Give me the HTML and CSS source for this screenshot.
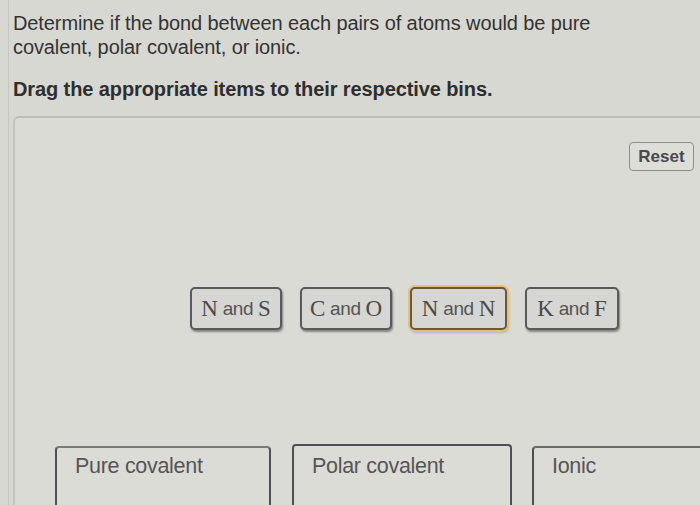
FILE: index.html
```html
<!DOCTYPE html>
<html>
<head>
<meta charset="utf-8">
<link rel="stylesheet" href="styles.css">
</head>
<body>
<div class="page">
  <div class="intro">
    <p class="q">Determine if the bond between each pairs of atoms would be pure covalent, polar covalent, or ionic.</p>
    <p class="instr">Drag the appropriate items to their respective bins.</p>
  </div>
  <div class="board">
    <div class="toolbar"><button class="reset">Reset</button></div>
    <div class="items">
      <div class="item"><span class="el">N</span> and <span class="el">S</span></div>
      <div class="item"><span class="el">C</span> and <span class="el">O</span></div>
      <div class="item focus"><span class="el">N</span> and <span class="el">N</span></div>
      <div class="item"><span class="el">K</span> and <span class="el">F</span></div>
    </div>
    <div class="bins">
      <div class="bin b1">Pure covalent</div>
      <div class="bin b2">Polar covalent</div>
      <div class="bin b3">Ionic</div>
    </div>
  </div>
</div>
</body>
</html>
```
FILE: styles.css
```css
html, body {
  margin: 0;
  padding: 0;
  width: 700px;
  height: 505px;
  overflow: hidden;
  background: #d8d8d2;
  font-family: "Liberation Sans", Arial, sans-serif;
}
.page {
  margin-left: 8px;
  border-left: 1px solid #c6c6c0;
  height: 505px;
  box-sizing: border-box;
  padding-left: 4px;
  display: flex;
  flex-direction: column;
}
.intro {
  padding-top: 11px;
}
.q {
  margin: 0;
  font-size: 20px;
  line-height: 24px;
  color: #333;
  width: 620px;
  letter-spacing: -0.1px;
}
.instr {
  margin: 18px 0 0 0;
  font-size: 20px;
  line-height: 24px;
  font-weight: bold;
  color: #2e2e2e;
  letter-spacing: -0.1px;
}
.board {
  margin-top: 15px;
  flex: 1;
  border-top: 2px solid #bdbdb6;
  border-left: 2px solid #c4c4be;
  border-top-left-radius: 6px;
  background: #dbdbd5;
  display: flex;
  flex-direction: column;
}
.toolbar {
  display: flex;
  justify-content: flex-end;
  padding: 24px 6px 0 0;
}
.reset {
  font-family: "Liberation Sans", Arial, sans-serif;
  font-weight: bold;
  font-size: 17px;
  color: #4a4a4a;
  background: #deded8;
  border: 1px solid #8e8e8a;
  border-radius: 4px;
  padding: 3px 7px;
  height: 29px;
  width: 65px;
}
.items {
  display: flex;
  gap: 18px;
  padding: 116px 0 0 175px;
}
.item {
  height: 43px;
  flex-shrink: 0;
  box-sizing: border-box;
  border: 2px solid #5a5a5a;
  border-radius: 5px;
  background: #d6d6d2;
  box-shadow: 1px 2px 2px rgba(60, 60, 60, 0.55);
  display: flex;
  align-items: center;
  justify-content: center;
  font-family: "Liberation Sans", Arial, sans-serif;
  font-size: 19px;
  color: #555;
  white-space: pre;
  letter-spacing: -0.4px;
}
.item .el {
  font-family: "Liberation Serif", "Times New Roman", serif;
  font-size: 23px;
  color: #4a4a4a;
  letter-spacing: 0;
}
.item:nth-child(1) { width: 92px; }
.item:nth-child(2) { width: 92px; }
.item:nth-child(3) { width: 97px; border-color: #6b5a3a; box-shadow: 0 0 0 2px #e2c27a, 1px 2px 3px rgba(60,60,60,0.5); }
.item:nth-child(4) { width: 94px; }
.bins {
  display: flex;
  gap: 20px;
  padding: 116px 0 0 40px;
  flex: 1;
}
.bin {
  flex-shrink: 0;
  border: 2px solid #505050;
  border-bottom: none;
  border-radius: 4px 4px 0 0;
  box-sizing: border-box;
  background: #dcdcd7;
  font-size: 21.5px;
  color: #555;
  padding: 6px 0 0 18px;
  letter-spacing: -0.3px;
}
.b1 { width: 216px; border-top-color: #7a7a76; }
.b2 { width: 220px; margin-left: 1px; margin-top: -2px; padding-top: 8px; }
.b3 { width: 200px; padding-left: 18px; border-right: none; border-top-color: #6a6a66; }
```
